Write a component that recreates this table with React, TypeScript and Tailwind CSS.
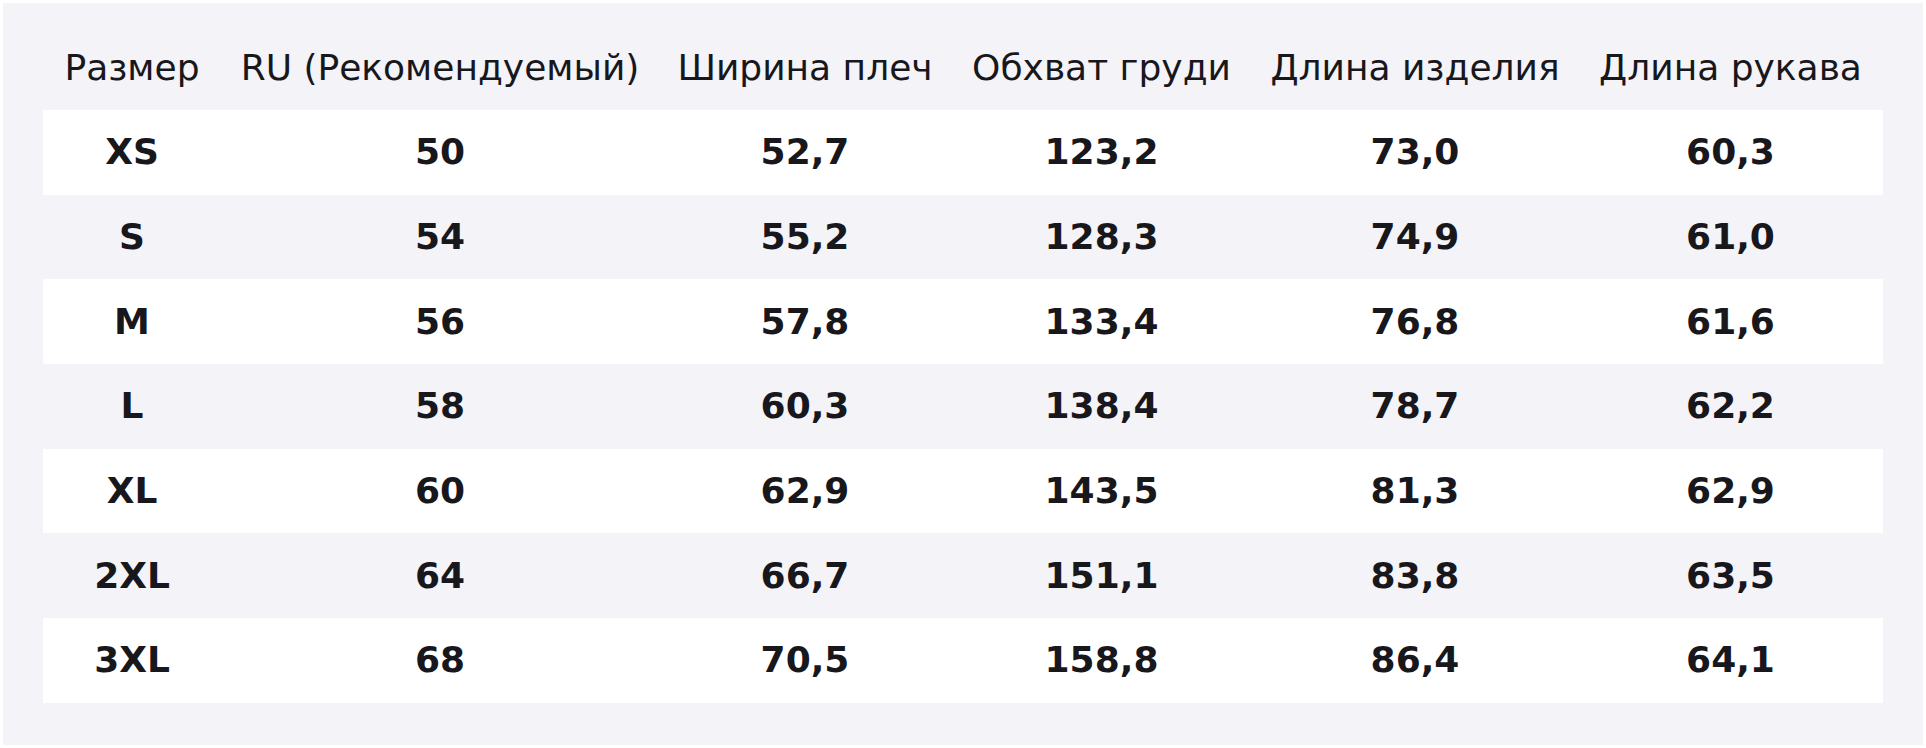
const HEADERS = [
  "Размер",
  "RU (Рекомендуемый)",
  "Ширина плеч",
  "Обхват груди",
  "Длина изделия",
  "Длина рукава",
];

const ROWS = [
  ["XS", "50", "52,7", "123,2", "73,0", "60,3"],
  ["S", "54", "55,2", "128,3", "74,9", "61,0"],
  ["M", "56", "57,8", "133,4", "76,8", "61,6"],
  ["L", "58", "60,3", "138,4", "78,7", "62,2"],
  ["XL", "60", "62,9", "143,5", "81,3", "62,9"],
  ["2XL", "64", "66,7", "151,1", "83,8", "63,5"],
  ["3XL", "68", "70,5", "158,8", "86,4", "64,1"],
];

const COLS = "grid grid-cols-[178px_438px_292px_301px_326px_305px]";

export default function App() {
  return (
    <div className="h-[748px] w-[1926px] bg-white p-[3px] font-['DejaVu_Sans',sans-serif] text-[#17171c]">
      <div className="h-full w-full bg-[#f3f3f8] px-[40px] pt-[45px]">
        <div className={`${COLS} pb-[22px]`}>
          {HEADERS.map((h) => (
            <div key={h} className="text-center text-[36px] leading-[40px] whitespace-nowrap">
              {h}
            </div>
          ))}
        </div>
        {ROWS.map((row, i) => (
          <div
            key={row[0]}
            className={`${COLS} h-[84.7px] items-center ${i % 2 === 0 ? "bg-white" : ""}`}
          >
            {row.map((cell, j) => (
              <div key={j} className="text-center text-[36px] font-bold leading-[40px]">
                {cell}
              </div>
            ))}
          </div>
        ))}
      </div>
    </div>
  );
}
